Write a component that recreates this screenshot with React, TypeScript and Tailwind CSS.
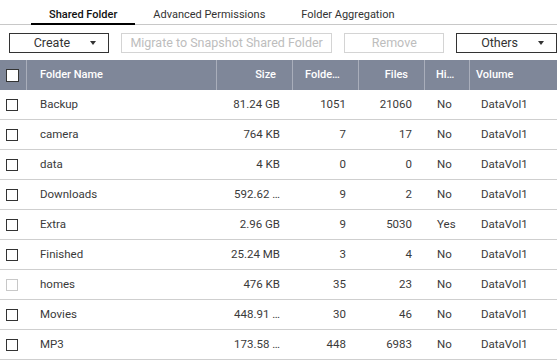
const rows = [
  { name: 'Backup', size: '81.24 GB', folders: '1051', files: '21060', hidden: 'No', volume: 'DataVol1' },
  { name: 'camera', size: '764 KB', folders: '7', files: '17', hidden: 'No', volume: 'DataVol1' },
  { name: 'data', size: '4 KB', folders: '0', files: '0', hidden: 'No', volume: 'DataVol1' },
  { name: 'Downloads', size: '592.62 …', folders: '9', files: '2', hidden: 'No', volume: 'DataVol1' },
  { name: 'Extra', size: '2.96 GB', folders: '9', files: '5030', hidden: 'Yes', volume: 'DataVol1' },
  { name: 'Finished', size: '25.24 MB', folders: '3', files: '4', hidden: 'No', volume: 'DataVol1' },
  { name: 'homes', size: '476 KB', folders: '35', files: '23', hidden: 'No', volume: 'DataVol1', disabled: true },
  { name: 'Movies', size: '448.91 …', folders: '30', files: '46', hidden: 'No', volume: 'DataVol1' },
  { name: 'MP3', size: '173.58 …', folders: '448', files: '6983', hidden: 'No', volume: 'DataVol1' },
]

const cols = 'grid grid-cols-[27px_190px_76px_66px_66px_45px_87px]'

function Caret() {
  return <span className="ml-5 inline-block w-0 h-0 border-l-[3px] border-r-[3px] border-t-[4px] border-l-transparent border-r-transparent border-t-[#333]" />
}

function Button({ label, caret, disabled, width }: { label: string; caret?: boolean; disabled?: boolean; width: string }) {
  return (
    <div
      className={`${width} h-[20px] flex items-center justify-center border text-[12.5px] ${
        disabled ? 'border-[#d4d4d4] text-[#bdbdbd]' : 'border-[#333] text-[#333]'
      }`}
    >
      <span className={caret ? 'ml-3' : ''}>{label}</span>
      {caret && <Caret />}
    </div>
  )
}

export default function App() {
  return (
    <div className="w-[557px] h-[360px] overflow-hidden bg-white font-['Roboto',sans-serif] text-[#333]">
      {/* Tabs */}
      <div className="flex h-[25px] border-b border-[#c8c8c8] pl-[31px]">
        <div className="px-[18px] pt-[7px] text-[11px] font-medium text-[#111] border-b-2 border-black -mb-px">Shared Folder</div>
        <div className="px-[18px] pt-[7px] text-[11px] text-[#333]">Advanced Permissions</div>
        <div className="px-[18px] pt-[7px] text-[11px] text-[#333]">Folder Aggregation</div>
      </div>

      {/* Toolbar */}
      <div className="flex gap-[12px] pl-[9px] pt-[8px] pb-[7px]">
        <Button label="Create" caret width="w-[100px]" />
        <Button label="Migrate to Snapshot Shared Folder" disabled width="w-[212px]" />
        <Button label="Remove" disabled width="w-[100px]" />
        <Button label="Others" caret width="w-[101px]" />
      </div>

      {/* Header */}
      <div className={`${cols} h-[30px] bg-[#7f8799] text-white text-[11px] font-medium`}>
        <div className="flex items-center pl-[6px] border-r border-[#a9aebb]">
          <span className="w-[13px] h-[13px] bg-white border border-[#333]" />
        </div>
        <div className="flex items-center pl-[13px] border-r border-[#a9aebb]">Folder Name</div>
        <div className="flex items-center justify-end pr-[16px] border-r border-[#a9aebb]">Size</div>
        <div className="flex items-center pl-[12px] border-r border-[#a9aebb]">Folde…</div>
        <div className="flex items-center justify-end pr-[16px] border-r border-[#a9aebb]">Files</div>
        <div className="flex items-center pl-[11px] border-r border-[#a9aebb]">Hi…</div>
        <div className="flex items-center pl-[6px]">Volume</div>
      </div>

      {/* Rows */}
      {rows.map((r) => (
        <div key={r.name} className={`${cols} h-[30px] pt-[1px] border-b border-[#cfcfcf] text-[11.5px] text-[#3a3a3a]`}>
          <div className="flex items-center pl-[6px]">
            <span className={`w-[12px] h-[12px] border ${r.disabled ? 'border-[#c8c8c8]' : 'border-[#333]'}`} />
          </div>
          <div className="flex items-center pl-[13px]">{r.name}</div>
          <div className="flex items-center justify-end pr-[13px]">{r.size}</div>
          <div className="flex items-center justify-end pr-[13px]">{r.folders}</div>
          <div className="flex items-center justify-end pr-[13px]">{r.files}</div>
          <div className="flex items-center pl-[12px]">{r.hidden}</div>
          <div className="flex items-center pl-[11px]">{r.volume}</div>
        </div>
      ))}
    </div>
  )
}
